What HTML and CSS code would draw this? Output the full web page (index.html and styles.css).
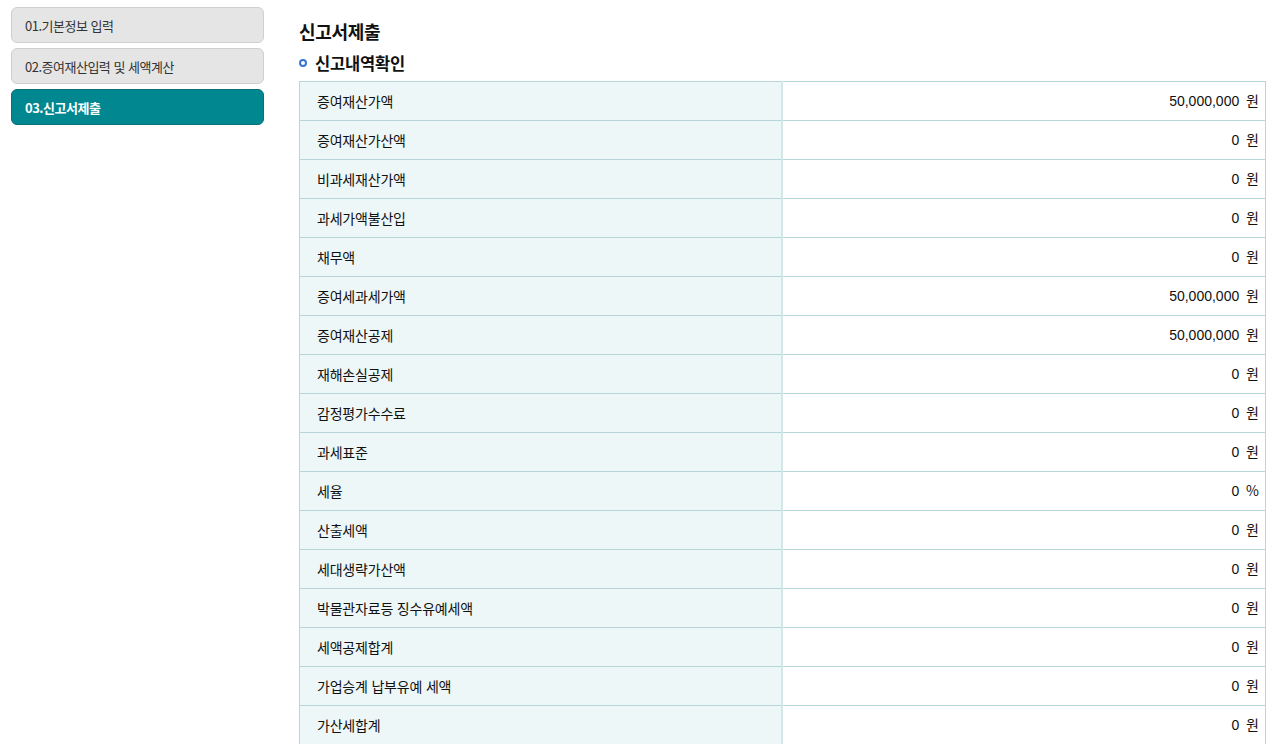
FILE: index.html
```html
<!DOCTYPE html>
<html lang="ko">
<head>
<meta charset="utf-8">
<title>신고서제출</title>
<link rel="stylesheet" href="styles.css">
</head>
<body>
<div class="page">
  <nav class="steps">
    <div class="step">01.기본정보 입력</div>
    <div class="step">02.증여재산입력 및 세액계산</div>
    <div class="step active">03.신고서제출</div>
  </nav>
  <main class="main">
    <h1 class="title">신고서제출</h1>
    <h2 class="subtitle"><span class="bullet"></span>신고내역확인</h2>
    <table class="report">
      <tbody>
        <tr><th>증여재산가액</th><td>50,000,000 <span class="unit">원</span></td></tr>
        <tr><th>증여재산가산액</th><td>0 <span class="unit">원</span></td></tr>
        <tr><th>비과세재산가액</th><td>0 <span class="unit">원</span></td></tr>
        <tr><th>과세가액불산입</th><td>0 <span class="unit">원</span></td></tr>
        <tr><th>채무액</th><td>0 <span class="unit">원</span></td></tr>
        <tr><th>증여세과세가액</th><td>50,000,000 <span class="unit">원</span></td></tr>
        <tr><th>증여재산공제</th><td>50,000,000 <span class="unit">원</span></td></tr>
        <tr><th>재해손실공제</th><td>0 <span class="unit">원</span></td></tr>
        <tr><th>감정평가수수료</th><td>0 <span class="unit">원</span></td></tr>
        <tr><th>과세표준</th><td>0 <span class="unit">원</span></td></tr>
        <tr><th>세율</th><td>0 <span class="unit">%</span></td></tr>
        <tr><th>산출세액</th><td>0 <span class="unit">원</span></td></tr>
        <tr><th>세대생략가산액</th><td>0 <span class="unit">원</span></td></tr>
        <tr><th>박물관자료등 징수유예세액</th><td>0 <span class="unit">원</span></td></tr>
        <tr><th>세액공제합계</th><td>0 <span class="unit">원</span></td></tr>
        <tr><th>가업승계 납부유예 세액</th><td>0 <span class="unit">원</span></td></tr>
        <tr><th>가산세합계</th><td>0 <span class="unit">원</span></td></tr>
      </tbody>
    </table>
  </main>
</div>
</body>
</html>
```

FILE: styles.css
```css
html, body {
  margin: 0;
  padding: 0;
  background: #ffffff;
}
body {
  font-family: "Noto Sans CJK KR", "Noto Sans", sans-serif;
  color: #222;
  font-size: 13px;
}
.page {
  display: flex;
  align-items: flex-start;
  gap: 35px;
  padding: 7px 14px 0 11px;
}
.steps {
  width: 253px;
  flex: none;
  display: flex;
  flex-direction: column;
  gap: 5px;
}
.step {
  box-sizing: border-box;
  height: 36px;
  display: flex;
  align-items: center;
  padding-left: 13px;
  background: #e5e5e5;
  border: 1px solid #cfcfcf;
  border-radius: 6px;
  color: #333;
  font-size: 13px;
  letter-spacing: -0.5px;
}
.step.active {
  background: #00878f;
  border-color: #0a6f77;
  color: #fff;
  font-weight: 700;
}
.main {
  flex: 1;
  padding-top: 11px;
}
.title {
  margin: 0 0 8px;
  font-size: 18px;
  line-height: 26px;
  font-weight: 700;
  color: #111;
  letter-spacing: -0.3px;
}
.subtitle {
  margin: 0 0 7px;
  display: flex;
  align-items: center;
  font-size: 16.5px;
  line-height: 22px;
  font-weight: 700;
  color: #111;
  letter-spacing: -0.2px;
}
.bullet {
  width: 4px;
  height: 4px;
  border: 2.5px solid #3a74d6;
  border-radius: 50%;
  margin-right: 8px;
}
.report {
  width: 967px;
  border-collapse: collapse;
  table-layout: fixed;
}
.report th,
.report td {
  height: 37.2px;
  padding: 0;
  border-top: 1px solid #b7d6da;
  border-bottom: 1px solid #b7d6da;
  font-size: 14px;
  line-height: 37px;
  color: #111;
}
.report th {
  width: 464px;
  text-align: left;
  font-weight: 400;
  background: #eef7f7;
  padding-left: 17px;
  border-left: 1px solid #b7d6da;
  border-right: 2px solid #d3e7ea;
  letter-spacing: -0.2px;
}
.report td {
  text-align: right;
  padding-right: 6px;
  border-right: 1px solid #b7d6da;
  font-family: "Liberation Sans", "Noto Sans CJK KR", sans-serif;
}
.report td .unit {
  font-family: "Noto Sans CJK KR", sans-serif;
  margin-left: 3px;
}
```
